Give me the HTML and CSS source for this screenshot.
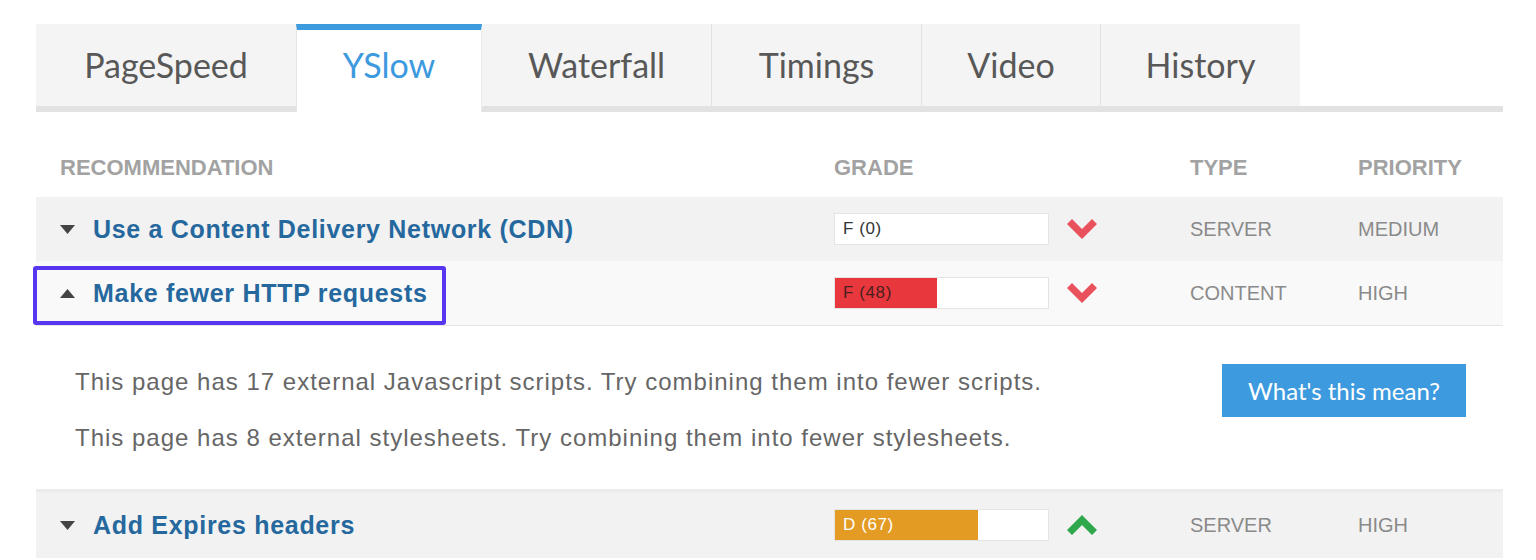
FILE: index.html
```html
<!DOCTYPE html>
<html lang="en">
<head>
<meta charset="utf-8">
<title>YSlow</title>
<link rel="stylesheet" href="styles.css">
</head>
<body>
<div class="wrap">
  <nav class="tabs">
    <div class="tab tab-pagespeed">PageSpeed</div>
    <div class="tab tab-yslow active">YSlow</div>
    <div class="tab tab-waterfall">Waterfall</div>
    <div class="tab tab-timings">Timings</div>
    <div class="tab tab-video">Video</div>
    <div class="tab tab-history">History</div>
  </nav>

  <div class="table">
    <div class="row head">
      <div class="cell c-rec">RECOMMENDATION</div>
      <div class="cell c-grade">GRADE</div>
      <div class="cell c-type">TYPE</div>
      <div class="cell c-pri">PRIORITY</div>
    </div>

    <div class="row item dark">
      <div class="cell c-rec">
        <svg class="tri" viewBox="0 0 15 9" width="15" height="9"><polygon points="0,0 15,0 7.5,9" fill="#444"/></svg>
        <a class="rec-link">Use a Content Delivery Network (CDN)</a>
      </div>
      <div class="cell c-grade">
        <div class="bar"><div class="fill" style="width:0%"></div><span class="bar-label">F (0)</span></div>
        <svg class="chev" viewBox="0 0 30 20" width="30" height="20"><polygon points="0,5 5,0 15,10 25,0 30,5 15,20" fill="#e9515d"/></svg>
      </div>
      <div class="cell c-type">SERVER</div>
      <div class="cell c-pri">MEDIUM</div>
    </div>

    <div class="row item light open">
      <div class="cell c-rec">
        <span class="highlight"></span>
        <svg class="tri" viewBox="0 0 15 9" width="15" height="9"><polygon points="0,9 15,9 7.5,0" fill="#444"/></svg>
        <a class="rec-link">Make fewer HTTP requests</a>
      </div>
      <div class="cell c-grade">
        <div class="bar"><div class="fill fill-red" style="width:48%"></div><span class="bar-label on-red">F (48)</span></div>
        <svg class="chev" viewBox="0 0 30 20" width="30" height="20"><polygon points="0,5 5,0 15,10 25,0 30,5 15,20" fill="#e9515d"/></svg>
      </div>
      <div class="cell c-type">CONTENT</div>
      <div class="cell c-pri">HIGH</div>
    </div>

    <div class="details">
      <div class="details-text">
        <p>This page has 17 external Javascript scripts. Try combining them into fewer scripts.</p>
        <p>This page has 8 external stylesheets. Try combining them into fewer stylesheets.</p>
      </div>
      <a class="btn">What's this mean?</a>
    </div>

    <div class="row item dark top-sep">
      <div class="cell c-rec">
        <svg class="tri" viewBox="0 0 15 9" width="15" height="9"><polygon points="0,0 15,0 7.5,9" fill="#444"/></svg>
        <a class="rec-link">Add Expires headers</a>
      </div>
      <div class="cell c-grade">
        <div class="bar"><div class="fill fill-orange" style="width:67%"></div><span class="bar-label on-orange">D (67)</span></div>
        <svg class="chev" viewBox="0 0 30 20" width="30" height="20"><polygon points="0,15 5,20 15,10 25,20 30,15 15,0" fill="#2ea84b"/></svg>
      </div>
      <div class="cell c-type">SERVER</div>
      <div class="cell c-pri">HIGH</div>
    </div>
  </div>
</div>
</body>
</html>
```

FILE: styles.css
```css
* { box-sizing: border-box; }

html, body {
  margin: 0;
  padding: 0;
  background: #ffffff;
}

body {
  font-family: "Liberation Sans", Arial, sans-serif;
  color: #666;
  overflow: hidden;
}

.wrap {
  width: 1536px;
  padding: 24px 33px 0 36px;
}

/* Tabs */
.tabs {
  display: flex;
  height: 88px;
  border-bottom: 6px solid #e2e2e2;
}

.tab {
  height: 82px;
  background: #f4f4f4;
  border-left: 1px solid #e2e2e2;
  display: flex;
  align-items: center;
  justify-content: center;
  font-family: Lato, "Open Sans", sans-serif;
  font-size: 34px;
  color: #585858;
  padding-bottom: 2px;
}

.tab:first-child { border-left: none; }

.tab-pagespeed { width: 260px; }
.tab-yslow { width: 186px; }
.tab-waterfall { width: 229px; }
.tab-timings { width: 210px; }
.tab-video { width: 179px; }
.tab-history { width: 200px; }

.tab.active {
  height: 88px;
  background: #ffffff;
  color: #3d9ade;
  border-top: 6px solid #3d9ade;
  border-left: 1px solid #e6e6e6;
  border-right: 1px solid #ececec;
  padding-bottom: 14px;
}

.tab.active + .tab { border-left: none; }

/* Table */
.row {
  display: grid;
  grid-template-columns: 798px 356px 168px 1fr;
  align-items: center;
}

.head {
  height: 85px;
  align-items: end;
  padding-bottom: 18px;
  font-size: 22px;
  line-height: 22px;
  font-weight: bold;
  color: #a2a2a2;
}

.head .c-rec { padding-left: 24px; }

.item {
  position: relative;
  height: 64px;
  font-size: 20px;
  color: #8a8a8a;
}

.item.dark { background: #f2f2f2; }
.item.light { background: #f9f9f9; height: 65px; border-bottom: 1px solid #e6e6e6; }
.item.top-sep { border-top: 3px solid #ececec; height: 69px; }

.c-rec {
  display: flex;
  align-items: center;
}

.item .c-rec { padding-left: 24px; }

.tri { flex: 0 0 auto; margin-right: 18px; }

.rec-link {
  font-size: 25px;
  font-weight: bold;
  color: #25689e;
  letter-spacing: 0.7px;
}

.c-grade {
  display: flex;
  align-items: center;
}

.bar {
  position: relative;
  width: 215px;
  height: 32px;
  border: 1px solid #e4e4e4;
  background: #ffffff;
  display: flex;
  align-items: center;
}

.fill {
  position: absolute;
  left: 0;
  top: 0;
  bottom: 0;
}

.fill-red { background: #e8383d; }
.fill-orange { background: #e39b24; }

.bar-label {
  position: relative;
  padding-left: 8px;
  font-size: 17px;
  letter-spacing: 0.6px;
  color: #333;
}

.bar-label.on-red { color: #4a2020; }
.bar-label.on-orange { color: #ffffff; }

.chev { margin-left: 18px; flex: 0 0 auto; }

.highlight {
  position: absolute;
  left: -3px;
  top: 5px;
  width: 413px;
  height: 59px;
  border: 4px solid #5836ef;
  border-radius: 3px;
}

/* Details */
.details {
  height: 163px;
  display: flex;
  justify-content: space-between;
  align-items: flex-start;
  padding: 28px 37px 0 39px;
}

.details-text p {
  margin: 0;
  font-size: 24px;
  line-height: 56px;
  letter-spacing: 1px;
  color: #666;
}

.btn {
  margin-top: 10px;
  width: 244px;
  height: 53px;
  background: #3d9ade;
  color: #ffffff;
  display: flex;
  align-items: center;
  justify-content: center;
  font-family: Lato, "Open Sans", sans-serif;
  font-size: 24px;
}
```
